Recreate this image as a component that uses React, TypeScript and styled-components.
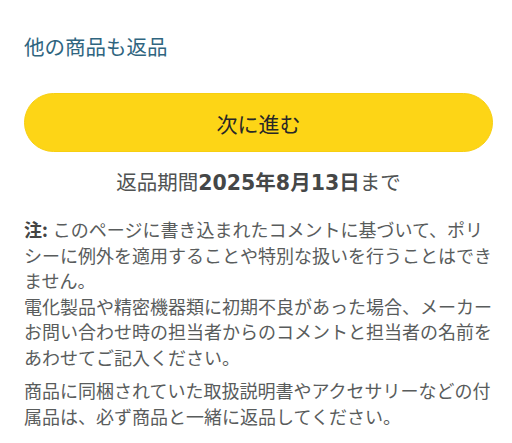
import styled, { createGlobalStyle } from "styled-components";

const GlobalStyle = createGlobalStyle`
    html, body {
        margin: 0;
        padding: 0;
        background: #fff;
    }
    body {
        font-family: "Noto Sans CJK JP", "Noto Sans", sans-serif;
        color: #565959;
    }
`;

const Page = styled.div`
    display: flex;
    flex-direction: column;
    padding: 32px 19px 0 24px;
`;

const ReturnLink = styled.a`
    font-size: 20.5px;
    line-height: 28px;
    color: #2f6580;
    text-decoration: none;
    align-self: flex-start;
`;

const NextButton = styled.button`
    margin-top: 33px;
    height: 59px;
    width: 100%;
    border: 1px solid #f7cf12;
    border-radius: 30px;
    background: #fdd516;
    font-family: "Noto Sans CJK JP", "Noto Sans", sans-serif;
    font-size: 21px;
    color: #272727;
    cursor: pointer;
`;

const Deadline = styled.div`
    margin-top: 15px;
    text-align: center;
    font-size: 20.5px;
    line-height: 28px;
    color: #505353;
    b {
        font-family: "DejaVu Sans", "Noto Sans CJK JP", sans-serif;
        font-weight: 700;
        color: #454747;
    }
`;

const Notes = styled.div`
    margin-top: 20px;
    font-size: 18px;
    line-height: 25.5px;
    color: #595c5c;
`;

const Para = styled.p<{ $gap?: number }>`
    margin: ${p => p.$gap ?? 0}px 0 0;
    strong {
        font-weight: 700;
        color: #444;
        margin-right: 5px;
    }
`;

const App = () => {
    return (
        <>
            <GlobalStyle />
            <Page>
                <ReturnLink href="#">他の商品も返品</ReturnLink>
                <NextButton>次に進む</NextButton>
                <Deadline>
                    返品期間<b>2025年8月13日</b>まで
                </Deadline>
                <Notes>
                    <Para>
                        <strong>注:</strong>このページに書き込まれたコメントに基づいて、ポリシーに例外を適用することや特別な扱いを行うことはできません。
                        <br />
                        電化製品や精密機器類に初期不良があった場合、メーカーお問い合わせ時の担当者からのコメントと担当者の名前をあわせてご記入ください。
                    </Para>
                    <Para $gap={8}>
                        商品に同梱されていた取扱説明書やアクセサリーなどの付属品は、必ず商品と一緒に返品してください。
                    </Para>
                </Notes>
            </Page>
        </>
    );
};

export default App;
